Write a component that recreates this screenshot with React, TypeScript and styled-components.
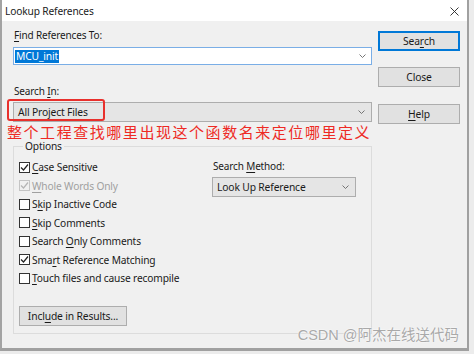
import styled, { createGlobalStyle } from "styled-components"

const GlobalStyle = createGlobalStyle`
  html, body {
    margin: 0;
    padding: 0;
    background: #ececec;
  }
  body {
    font-family: "Noto Sans", "Noto Sans CJK SC", sans-serif;
    font-size: 10px;
    letter-spacing: -0.15px;
    color: #1a1a1a;
  }
`

const Window = styled.div`
  position: relative;
  width: 469px;
  height: 351px;
  display: flex;
  flex-direction: column;
  border-left: 2px solid #a3a3a3;
  border-right: 2px solid #a0a0a0;
  border-bottom: 3px solid #a0a0a0;
  background: #f0f0f0;
  box-sizing: border-box;
  overflow: hidden;
`

const TitleBar = styled.div`
  height: 21px;
  flex: none;
  background: #ffffff;
  display: flex;
  align-items: center;
  justify-content: space-between;
  padding: 0 8px 0 3px;
  font-size: 10.2px;
  color: #222;
`

const CloseX = styled.svg`
  width: 9px;
  height: 9px;
  margin-top: 1px;
`

const Body = styled.div`
  flex: 1;
  display: flex;
  padding-left: 11px;
`

const MainColumn = styled.div`
  width: 359px;
  display: flex;
  flex-direction: column;
`

const ButtonColumn = styled.div`
  width: 82px;
  margin-left: 6px;
  display: flex;
  flex-direction: column;
`

const Label = styled.div<{ top: number }>`
  height: 14px;
  line-height: 14px;
  margin-top: ${p => p.top}px;
  padding-left: 1px;
`

const Key = styled.span`
  text-decoration: underline;
  text-underline-offset: 1.5px;
  text-decoration-thickness: 1px;
`

const TextInput = styled.div`
  margin-top: 5px;
  height: 18px;
  box-sizing: border-box;
  border: 1px solid #7aaee6;
  background: #ffffff;
  display: flex;
  align-items: center;
  justify-content: space-between;
  padding: 0 5px 0 1px;
`

const Selected = styled.span`
  background: #0078d7;
  color: #ffffff;
  padding: 0 1px;
  line-height: 13px;
  font-size: 10.3px;
`

const Chevron = styled.svg`
  width: 7px;
  height: 4px;
`

const ComboWrap = styled.div`
  position: relative;
  margin-top: 4px;
`

const Combo = styled.div<{ w?: number }>`
  height: 20px;
  width: ${p => (p.w ? `${p.w}px` : "auto")};
  box-sizing: border-box;
  border: 1px solid #adadad;
  background: #e5e5e5;
  display: flex;
  align-items: center;
  justify-content: space-between;
  padding: 0 6px 0 4px;
  font-size: 10.3px;
`

const Annotation = styled.div`
  position: absolute;
  left: -6px;
  top: -3px;
  width: 98px;
  height: 22px;
  border: 2px solid #e8302c;
  border-radius: 3px;
  box-sizing: border-box;
`

const RedNote = styled.div`
  margin-top: 2px;
  margin-left: -6px;
  height: 15px;
  line-height: 15px;
  font-family: "Noto Sans CJK SC", sans-serif;
  font-size: 15px;
  letter-spacing: 1.55px;
  color: #ee2a24;
  white-space: nowrap;
`

const Group = styled.fieldset`
  margin: 1px 0 0 0;
  padding: 6px 5px 0 5px;
  border: 1px solid #dcdcdc;
  height: 194px;
  box-sizing: border-box;
`

const Legend = styled.legend`
  padding: 0 2px;
  margin-left: 4px;
  line-height: 12px;
  height: 12px;
  font-size: 10.2px;
`

const GroupInner = styled.div`
  display: flex;
`

const CheckList = styled.div`
  width: 193px;
  display: flex;
  flex-direction: column;
`

const CheckRow = styled.div<{ disabled?: boolean }>`
  height: 18.5px;
  display: flex;
  align-items: center;
  color: ${p => (p.disabled ? "#a0a0a0" : "#1a1a1a")};
  font-size: 10.2px;
  white-space: nowrap;
`

const Box = styled.div<{ disabled?: boolean }>`
  width: 11px;
  height: 11px;
  box-sizing: border-box;
  border: 1px solid ${p => (p.disabled ? "#c4c4c4" : "#333333")};
  background: ${p => (p.disabled ? "#f0f0f0" : "#ffffff")};
  margin-right: 2px;
  display: flex;
  align-items: center;
  justify-content: center;
  flex: none;
`

const MethodColumn = styled.div`
  display: flex;
  flex-direction: column;
`

const Button = styled.div<{ top: number; primary?: boolean; w?: number }>`
  margin-top: ${p => p.top}px;
  width: ${p => (p.w ? `${p.w}px` : "auto")};
  height: 20px;
  box-sizing: border-box;
  border: 1px solid ${p => (p.primary ? "#0078d7" : "#adadad")};
  box-shadow: ${p => (p.primary ? "inset 0 0 0 1px #0078d7" : "none")};
  background: #e1e1e1;
  display: flex;
  align-items: center;
  justify-content: center;
  font-size: 10.3px;
`

const Watermark = styled.div`
  position: absolute;
  right: 8px;
  bottom: 4px;
  font-family: "Liberation Sans", "Noto Sans CJK SC", sans-serif;
  font-size: 14.5px;
  letter-spacing: 0;
  color: #a9a9a9;
  text-shadow: 0 0 1px #ffffff, 0 0 2px #ffffff;
  white-space: nowrap;
`

const Tick = ({ color }: { color: string }) => (
  <svg width="9" height="9" viewBox="0 0 9 9">
    <polyline points="1,4.5 3.5,7 8,1.5" fill="none" stroke={color} strokeWidth="1.2" />
  </svg>
)

const Check = ({ checked, disabled, children }: { checked?: boolean; disabled?: boolean; children: React.ReactNode }) => (
  <CheckRow disabled={disabled}>
    <Box disabled={disabled}>{checked && <Tick color={disabled ? "#b4b4b4" : "#222"} />}</Box>
    <span>{children}</span>
  </CheckRow>
)

const Down = () => (
  <Chevron viewBox="0 0 7 4">
    <polyline points="0.5,0.5 3.5,3.5 6.5,0.5" fill="none" stroke="#666" strokeWidth="0.9" />
  </Chevron>
)

export default function App() {
  return (
    <>
      <GlobalStyle />
      <Window>
        <TitleBar>
          <span>Lookup References</span>
          <CloseX viewBox="0 0 9 9">
            <line x1="0.5" y1="0.5" x2="8.5" y2="8.5" stroke="#222" strokeWidth="0.9" />
            <line x1="8.5" y1="0.5" x2="0.5" y2="8.5" stroke="#222" strokeWidth="0.9" />
          </CloseX>
        </TitleBar>
        <Body>
          <MainColumn>
            <Label top={7}>
              <Key>F</Key>ind References To:
            </Label>
            <TextInput>
              <Selected>MCU_init</Selected>
              <Down />
            </TextInput>
            <Label top={19}>
              Search <Key>I</Key>n:
            </Label>
            <ComboWrap>
              <Combo>
                <span>All Project Files</span>
                <Down />
              </Combo>
              <Annotation />
            </ComboWrap>
            <RedNote>整个工程查找哪里出现这个函数名来定位哪里定义</RedNote>
            <Group>
              <Legend>Options</Legend>
              <GroupInner>
                <CheckList>
                  <Check checked>
                    <Key>C</Key>ase Sensitive
                  </Check>
                  <Check checked disabled>
                    <Key>W</Key>hole Words Only
                  </Check>
                  <Check>
                    S<Key>k</Key>ip Inactive Code
                  </Check>
                  <Check>
                    <Key>S</Key>kip Comments
                  </Check>
                  <Check>
                    Search <Key>O</Key>nly Comments
                  </Check>
                  <Check checked>
                    Sma<Key>r</Key>t Reference Matching
                  </Check>
                  <Check>
                    <Key>T</Key>ouch files and cause recompile
                  </Check>
                  <Button top={18} w={108}>
                    Incl<Key>u</Key>de in Results...
                  </Button>
                </CheckList>
                <MethodColumn>
                  <Label top={1}>
                    Search <Key>M</Key>ethod:
                  </Label>
                  <ComboWrap>
                    <Combo w={144}>
                      <span>Look Up Reference</span>
                      <Down />
                    </Combo>
                  </ComboWrap>
                </MethodColumn>
              </GroupInner>
            </Group>
          </MainColumn>
          <ButtonColumn>
            <Button top={10} primary>
              Sea<Key>r</Key>ch
            </Button>
            <Button top={16}>Close</Button>
            <Button top={17}>
              <Key>H</Key>elp
            </Button>
          </ButtonColumn>
        </Body>
        <Watermark>CSDN @阿杰在线送代码</Watermark>
      </Window>
    </>
  )
}
